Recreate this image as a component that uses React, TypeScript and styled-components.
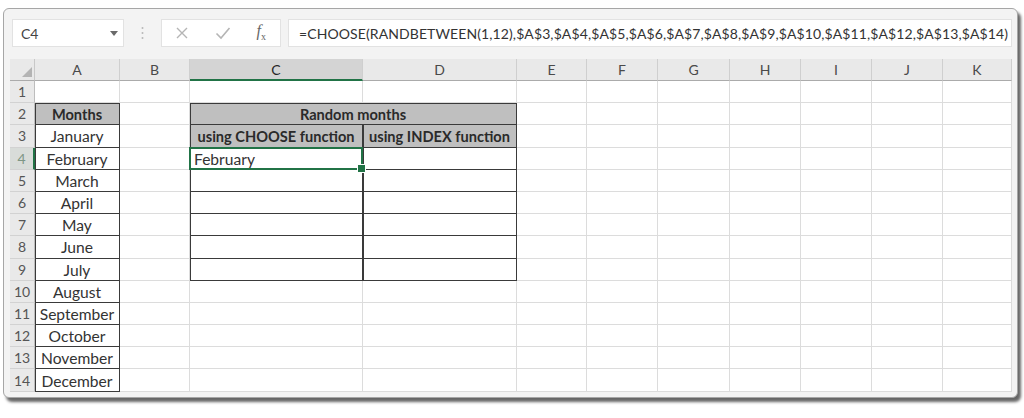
import styled, { createGlobalStyle, css } from "styled-components";

const GlobalStyle = createGlobalStyle`
	html, body {
		margin: 0;
		padding: 0;
		background: #ffffff;
	}
	body {
		font-family: Lato, "Open Sans", sans-serif;
	}
	* {
		box-sizing: border-box;
	}
`;

const GRID = "#dcdcdc";
const DARK = "#3a3a3a";
const GREEN = "#217346";

const columns = ["A", "B", "C", "D", "E", "F", "G", "H", "I", "J", "K"];
const widths = [25, 85, 70, 173, 154, 70, 71, 72, 71, 71, 71, 69];
const months = [
	"January",
	"February",
	"March",
	"April",
	"May",
	"June",
	"July",
	"August",
	"September",
	"October",
	"November",
	"December",
];
const formula =
	"=CHOOSE(RANDBETWEEN(1,12),$A$3,$A$4,$A$5,$A$6,$A$7,$A$8,$A$9,$A$10,$A$11,$A$12,$A$13,$A$14)";

interface CellData {
	text?: string;
	bold?: boolean;
	fill?: boolean;
	align?: "left" | "center";
	span?: number;
	box?: { top?: boolean; left?: boolean; right?: boolean; bottom?: boolean };
	selected?: boolean;
}

function buildRow(r: number): CellData[] {
	const row: CellData[] = [];
	const boxed = { left: true, right: true, bottom: true };
	// column A
	if (r === 2) row.push({ text: "Months", bold: true, fill: true, box: { ...boxed, top: true } });
	else if (r >= 3) row.push({ text: months[r - 3], box: boxed });
	else row.push({});
	// column B
	row.push({});
	// columns C and D
	if (r === 2) {
		row.push({ text: "Random months", bold: true, fill: true, span: 2, box: { ...boxed, top: true } });
	} else if (r === 3) {
		row.push({ text: "using CHOOSE function", bold: true, fill: true, box: boxed });
		row.push({ text: "using INDEX function", bold: true, fill: true, box: boxed });
	} else if (r >= 4 && r <= 9) {
		row.push({
			text: r === 4 ? "February" : "",
			align: "left",
			box: boxed,
			selected: r === 4,
		});
		row.push({ box: boxed });
	} else {
		row.push({});
		row.push({});
	}
	// columns E to K
	for (let i = 0; i < 7; i++) row.push({});
	return row;
}

export default function App() {
	const rows = Array.from({ length: 14 }, (_, i) => i + 1);
	return (
		<Page>
			<GlobalStyle />
			<Window>
				<FormulaBar>
					<NameBox>
						<span>C4</span>
						<svg width="8" height="5" viewBox="0 0 8 5">
							<path d="M0 0 L8 0 L4 5 Z" fill="#6a6a6a" />
						</svg>
					</NameBox>
					<Grip>
						<svg width="3" height="14" viewBox="0 0 3 14">
							<circle cx="1.5" cy="2" r="1" fill="#b8b8b8" />
							<circle cx="1.5" cy="7" r="1" fill="#b8b8b8" />
							<circle cx="1.5" cy="12" r="1" fill="#b8b8b8" />
						</svg>
					</Grip>
					<FxBox>
						<svg width="14" height="14" viewBox="0 0 14 14">
							<path d="M2 2 L12 12 M12 2 L2 12" stroke="#b5b5b5" strokeWidth="1.4" fill="none" />
						</svg>
						<svg width="16" height="14" viewBox="0 0 16 14">
							<path d="M1.5 7.5 L6 12 L14.5 2" stroke="#b5b5b5" strokeWidth="1.6" fill="none" />
						</svg>
						<FxLabel>
							<i>f</i>
							<sub>x</sub>
						</FxLabel>
					</FxBox>
					<FormulaInput>{formula}</FormulaInput>
				</FormulaBar>
				<Sheet>
					<Corner>
						<svg width="10" height="10" viewBox="0 0 10 10">
							<path d="M10 0 L10 10 L0 10 Z" fill="#b4b4b4" />
						</svg>
					</Corner>
					{columns.map((c) => (
						<ColHeader key={c} $active={c === "C"}>
							{c}
						</ColHeader>
					))}
					{rows.map((r) => (
						<Row key={r} r={r} />
					))}
				</Sheet>
			</Window>
		</Page>
	);
}

function Row({ r }: { r: number }) {
	const cells = buildRow(r);
	return (
		<>
			<RowHeader $active={r === 4}>{r}</RowHeader>
			{cells.map((cell, i) => (
				<Cell
					key={i}
					$bold={cell.bold}
					$fill={cell.fill}
					$align={cell.align ?? "center"}
					$span={cell.span ?? 1}
					$top={cell.box?.top}
					$left={cell.box?.left}
					$right={cell.box?.right}
					$bottom={cell.box?.bottom}
					$selected={cell.selected}
				>
					{cell.text}
				</Cell>
			))}
		</>
	);
}

const Page = styled.div`
	padding: 8px 6px 20px 3px;
`;

const Window = styled.div`
	width: 1015px;
	height: 390px;
	background: #f3f3f3;
	border: 1px solid #a6a6a6;
	border-radius: 6px;
	box-shadow: 3px 4px 3px rgba(0, 0, 0, 0.6);
	padding: 10px 5px 5px 6px;
	display: flex;
	flex-direction: column;
`;

const FormulaBar = styled.div`
	display: flex;
	height: 28px;
	margin-bottom: 12px;
	color: #333;
`;

const NameBox = styled.div`
	width: 112px;
	margin-left: 2px;
	background: #fff;
	border: 1px solid #e2e2e2;
	display: flex;
	align-items: center;
	justify-content: space-between;
	padding: 0 5px 0 8px;
	color: #444;
	font-size: 14px;
`;

const Grip = styled.div`
	width: 37px;
	display: flex;
	align-items: center;
	justify-content: center;
`;

const FxBox = styled.div`
	width: 120px;
	background: #fff;
	border: 1px solid #e2e2e2;
	display: flex;
	align-items: center;
	justify-content: space-between;
	padding: 0 14px 0 13px;
`;

const FxLabel = styled.span`
	font-family: "Liberation Serif", "DejaVu Serif", serif;
	color: #666;
	font-size: 16px;
	line-height: 1;

	sub {
		font-size: 10px;
	}
`;

const FormulaInput = styled.div`
	flex: 1;
	margin-left: 7px;
	background: #fff;
	border: 1px solid #e2e2e2;
	display: flex;
	align-items: center;
	padding-left: 10px;
	white-space: nowrap;
	overflow: hidden;
	color: #333;
	font-size: 14px;
	letter-spacing: 0.1px;
`;

const Sheet = styled.div`
	display: grid;
	grid-template-columns: ${widths.map((w) => `${w}px`).join(" ")};
	grid-template-rows: 22px;
	grid-auto-rows: 22.2px;
	background: #fff;
	color: #333;
`;

const headerBase = css`
	background: #e9e9e9;
	color: #4a4a4a;
	font-size: 14px;
	display: flex;
	align-items: center;
	justify-content: center;
`;

const Corner = styled.div`
	${headerBase};
	justify-content: flex-end;
	align-items: flex-end;
	padding: 0 2px 3px 0;
	border-right: 1px solid #c8c8c8;
	border-bottom: 1px solid #ababab;
`;

const ColHeader = styled.div<{ $active?: boolean }>`
	${headerBase};
	border-right: 1px solid #cfcfcf;
	border-bottom: 1px solid #ababab;
	${({ $active }) =>
		$active &&
		css`
			background: #d4d4d4;
			color: #262626;
			border-bottom: 2px solid ${GREEN};
		`}
`;

const RowHeader = styled.div<{ $active?: boolean }>`
	${headerBase};
	color: #555;
	border-right: 1px solid #bdbdbd;
	border-bottom: 1px solid #d2d2d2;
	${({ $active }) =>
		$active &&
		css`
			background: #d8dcd9;
			color: #7d9685;
			border-right: 2px solid ${GREEN};
		`}
`;

const Cell = styled.div<{
	$bold?: boolean;
	$fill?: boolean;
	$align: "left" | "center";
	$span: number;
	$top?: boolean;
	$left?: boolean;
	$right?: boolean;
	$bottom?: boolean;
	$selected?: boolean;
}>`
	position: relative;
	grid-column: span ${({ $span }) => $span};
	display: flex;
	align-items: center;
	justify-content: ${({ $align }) => ($align === "left" ? "flex-start" : "center")};
	padding: 1px 4px 0;
	white-space: nowrap;
	font-size: ${({ $bold }) => ($bold ? "14.6px" : "15.6px")};
	font-weight: ${({ $bold }) => ($bold ? 700 : 400)};
	color: ${({ $bold }) => ($bold ? "#2a2a2a" : "#333")};
	background: ${({ $fill }) => ($fill ? "#bfbfbf" : "#fff")};
	border-right: 1px solid ${({ $right }) => ($right ? DARK : GRID)};
	border-bottom: 1px solid ${({ $bottom }) => ($bottom ? DARK : GRID)};
	box-shadow: ${({ $top, $left }) =>
		[$top ? `inset 0 1px 0 ${DARK}` : "", $left ? `inset 1px 0 0 ${DARK}` : ""]
			.filter(Boolean)
			.join(", ") || "none"};

	${({ $selected }) =>
		$selected &&
		css`
			z-index: 2;
			&::before {
				content: "";
				position: absolute;
				left: -1px;
				top: -1px;
				right: -1px;
				bottom: -1px;
				border: 2px solid ${GREEN};
				pointer-events: none;
			}
			&::after {
				content: "";
				position: absolute;
				right: -4px;
				bottom: -4px;
				width: 7px;
				height: 7px;
				background: ${GREEN};
				border: 1px solid #fff;
			}
		`}
`;
